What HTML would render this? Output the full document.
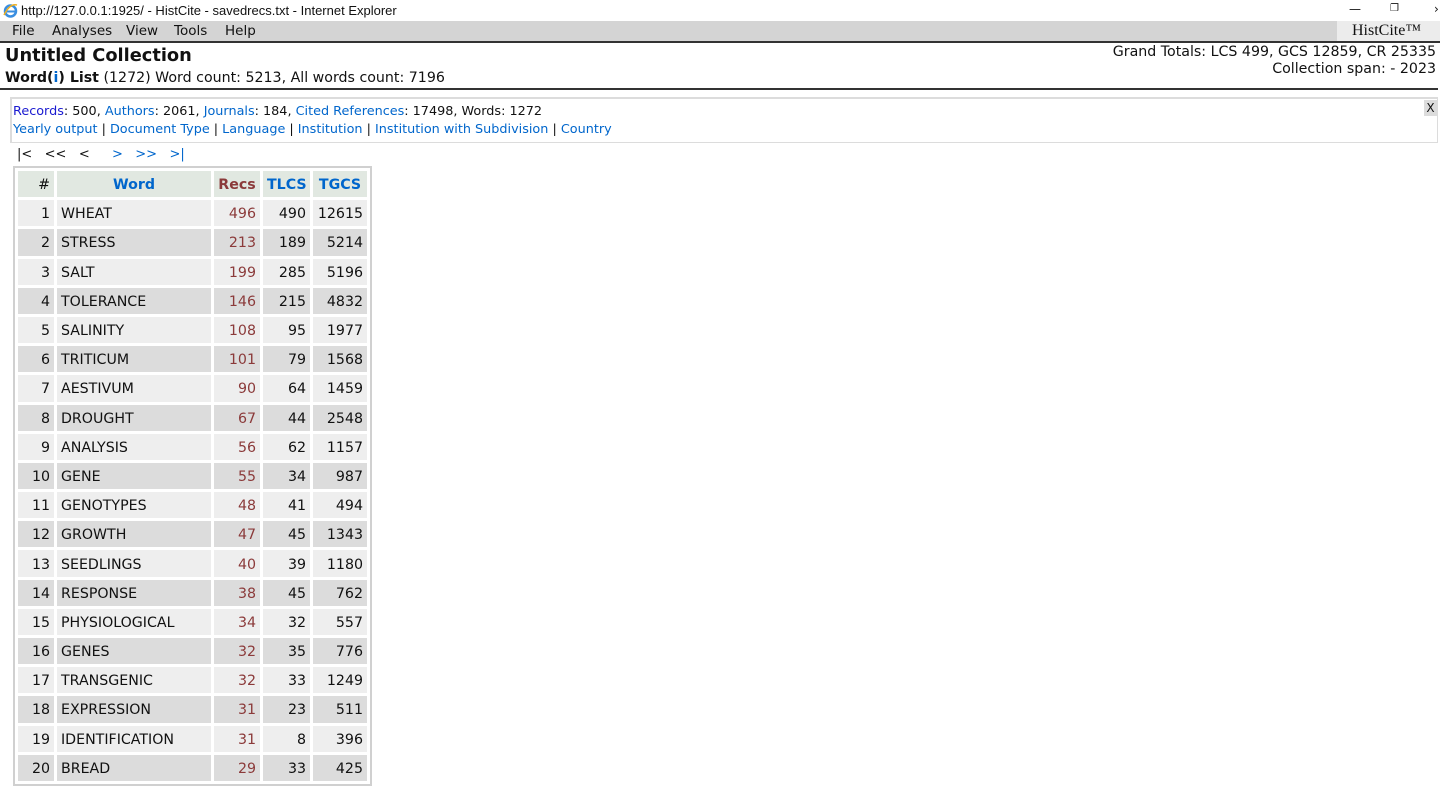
<!DOCTYPE html>
<html><head><meta charset="utf-8"><style>
*{margin:0;padding:0;box-sizing:border-box}
body{width:1440px;height:784px;overflow:hidden;background:#fff;font-family:"DejaVu Sans",Verdana,sans-serif;font-size:13px;color:#111;position:relative}
.a{position:absolute;white-space:nowrap}
.b{color:#0066cc}
.rc{color:#8b3a3a}
table{position:absolute;left:13px;top:166px;border:2px solid #d0d0d0;border-spacing:3px;border-collapse:separate;table-layout:fixed;width:357px}
td,th{height:26.2px;padding:2px 4px 0;font-size:14.2px;font-weight:normal;overflow:visible;white-space:nowrap}
th{background:#e1e8e1;font-weight:bold}
tr.o td{background:#eeeeee}
tr.e td{background:#dcdcdc}
td.r{text-align:right}
</style></head><body>
<svg class="a" style="left:3px;top:3px" width="15" height="15" viewBox="0 0 15 15"><circle cx="7.5" cy="8" r="5.5" fill="none" stroke="#3a8ee0" stroke-width="2.5"/><line x1="3" y1="8.5" x2="12" y2="8.5" stroke="#3a8ee0" stroke-width="2"/><path d="M1 12 Q7 0 14 2" fill="none" stroke="#f0b020" stroke-width="1.5"/></svg>
<div class="a" style="left:21px;top:3px;font-family:'Liberation Sans',sans-serif;font-size:13px;color:#111">http://127.0.0.1:1925/ - HistCite - savedrecs.txt - Internet Explorer</div>
<div class="a" style="left:1349px;top:2px;font-size:12px">—</div>
<div class="a" style="left:1390px;top:3px;font-size:10px">❐</div>
<div class="a" style="left:1434px;top:2px;font-size:12px">›</div>
<div class="a" style="left:0;top:21px;width:1440px;height:20px;background:#d4d4d4"></div>
<div class="a" style="left:1337px;top:21px;width:103px;height:20px;background:#ececec"></div>
<div class="a" style="left:12px;top:23px;font-size:13.5px">File</div>
<div class="a" style="left:52px;top:23px;font-size:13.5px">Analyses</div>
<div class="a" style="left:126px;top:23px;font-size:13.5px">View</div>
<div class="a" style="left:174px;top:23px;font-size:13.5px">Tools</div>
<div class="a" style="left:225px;top:23px;font-size:13.5px">Help</div>
<div class="a" style="left:1352px;top:22px;font-family:'Liberation Serif',serif;font-size:16px">HistCite™</div>
<div class="a" style="left:0;top:41px;width:1440px;height:2px;background:#333"></div>
<div class="a" style="left:5px;top:45px;font-size:17.8px;font-weight:bold">Untitled Collection</div>
<div class="a" style="left:5px;top:70px;font-size:14.2px"><b>Word(<span class="b">i</span>) List</b> (1272) Word count: 5213, All words count: 7196</div>
<div class="a" style="right:4px;top:44px;font-size:14.2px;text-align:right;line-height:17px">Grand Totals: LCS 499, GCS 12859, CR 25335<br>Collection span: - 2023</div>
<div class="a" style="left:0;top:88px;width:1438px;height:2px;background:#333"></div>
<div class="a" style="left:10px;top:97px;width:1428px;height:46px;border:2px solid #dcdcdc;border-right-width:1px;border-bottom-width:1px"></div>
<div class="a" style="left:1424px;top:100px;width:13px;height:16px;background:#dcdcdc;font-size:12px;text-align:center;line-height:16px">X</div>
<div class="a" style="left:13px;top:104px;font-size:12.8px"><span style="color:#1a1ad0">Records</span>: 500, <span class="b">Authors</span>: 2061, <span class="b">Journals</span>: 184, <span class="b">Cited References</span>: 17498, Words: 1272</div>
<div class="a" style="left:13px;top:122px;font-size:12.8px"><span class="b">Yearly output</span> | <span class="b">Document Type</span> | <span class="b">Language</span> | <span class="b">Institution</span> | <span class="b">Institution with Subdivision</span> | <span class="b">Country</span></div>
<div class="a" style="left:17px;top:147px">|&lt;&nbsp;&nbsp; &lt;&lt;&nbsp;&nbsp; &lt;</div>
<div class="a b" style="left:112px;top:147px">&gt;&nbsp;&nbsp; &gt;&gt;&nbsp;&nbsp; &gt;|</div>
<table>
<colgroup><col style="width:36px"><col style="width:154px"><col style="width:46px"><col style="width:47px"><col style="width:54px"></colgroup>
<tr><th style="text-align:right;font-weight:normal">#</th><th style="color:#0066cc">Word</th><th style="color:#8b3a3a">Recs</th><th style="color:#0066cc">TLCS</th><th style="color:#0066cc">TGCS</th></tr>
<tr class="o"><td class="r">1</td><td>WHEAT</td><td class="r rc">496</td><td class="r">490</td><td class="r">12615</td></tr>
<tr class="e"><td class="r">2</td><td>STRESS</td><td class="r rc">213</td><td class="r">189</td><td class="r">5214</td></tr>
<tr class="o"><td class="r">3</td><td>SALT</td><td class="r rc">199</td><td class="r">285</td><td class="r">5196</td></tr>
<tr class="e"><td class="r">4</td><td>TOLERANCE</td><td class="r rc">146</td><td class="r">215</td><td class="r">4832</td></tr>
<tr class="o"><td class="r">5</td><td>SALINITY</td><td class="r rc">108</td><td class="r">95</td><td class="r">1977</td></tr>
<tr class="e"><td class="r">6</td><td>TRITICUM</td><td class="r rc">101</td><td class="r">79</td><td class="r">1568</td></tr>
<tr class="o"><td class="r">7</td><td>AESTIVUM</td><td class="r rc">90</td><td class="r">64</td><td class="r">1459</td></tr>
<tr class="e"><td class="r">8</td><td>DROUGHT</td><td class="r rc">67</td><td class="r">44</td><td class="r">2548</td></tr>
<tr class="o"><td class="r">9</td><td>ANALYSIS</td><td class="r rc">56</td><td class="r">62</td><td class="r">1157</td></tr>
<tr class="e"><td class="r">10</td><td>GENE</td><td class="r rc">55</td><td class="r">34</td><td class="r">987</td></tr>
<tr class="o"><td class="r">11</td><td>GENOTYPES</td><td class="r rc">48</td><td class="r">41</td><td class="r">494</td></tr>
<tr class="e"><td class="r">12</td><td>GROWTH</td><td class="r rc">47</td><td class="r">45</td><td class="r">1343</td></tr>
<tr class="o"><td class="r">13</td><td>SEEDLINGS</td><td class="r rc">40</td><td class="r">39</td><td class="r">1180</td></tr>
<tr class="e"><td class="r">14</td><td>RESPONSE</td><td class="r rc">38</td><td class="r">45</td><td class="r">762</td></tr>
<tr class="o"><td class="r">15</td><td>PHYSIOLOGICAL</td><td class="r rc">34</td><td class="r">32</td><td class="r">557</td></tr>
<tr class="e"><td class="r">16</td><td>GENES</td><td class="r rc">32</td><td class="r">35</td><td class="r">776</td></tr>
<tr class="o"><td class="r">17</td><td>TRANSGENIC</td><td class="r rc">32</td><td class="r">33</td><td class="r">1249</td></tr>
<tr class="e"><td class="r">18</td><td>EXPRESSION</td><td class="r rc">31</td><td class="r">23</td><td class="r">511</td></tr>
<tr class="o"><td class="r">19</td><td>IDENTIFICATION</td><td class="r rc">31</td><td class="r">8</td><td class="r">396</td></tr>
<tr class="e"><td class="r">20</td><td>BREAD</td><td class="r rc">29</td><td class="r">33</td><td class="r">425</td></tr>
</table>
</body></html>
